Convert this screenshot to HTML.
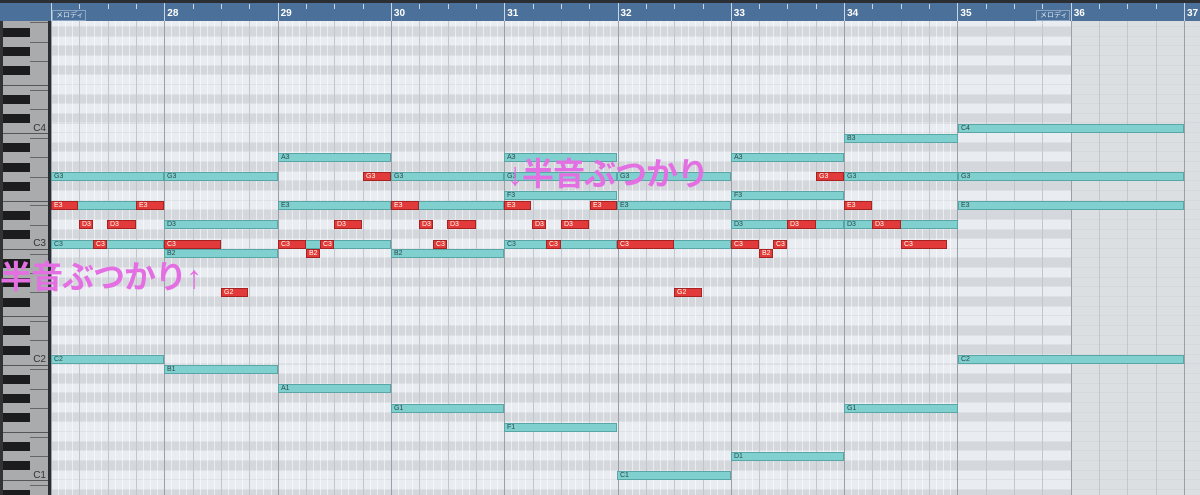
<!DOCTYPE html><html><head><meta charset="utf-8"><style>
html,body{margin:0;width:1200px;height:495px;overflow:hidden}
body{background:#dadde1;font-family:"Liberation Sans","Noto Sans CJK JP",sans-serif;position:relative}
div{position:absolute;box-sizing:border-box}
.n{height:9px;font-size:7px;line-height:8px;padding-left:2px;color:#2a4a4a;background:#80d0cf;border:1px solid #5aa6a6;overflow:hidden}
.r{background:#e2393a;border-color:#a82222;color:#ffe}
.ov{color:#e36fe3;font-weight:bold;font-size:32px;line-height:32px;white-space:nowrap;letter-spacing:-1px}
</style></head><body>
<div id="g" style="left:0;top:0;width:1200px;height:495px;overflow:hidden"></div>
<script>
var g=document.getElementById('g'),h='';
var RH=9.64,C1=470.5;
function yt(p){return C1-(p-12)*RH;}
var blk=[1,3,6,8,10];
for(var p=9;p<60;p++){var y=yt(p),b=blk.indexOf(p%12)>=0;
 h+='<div style="left:51px;top:'+y.toFixed(1)+'px;width:1020px;height:'+RH.toFixed(2)+'px;background:'+(b?'#d4d8dc':'#e9edf1')+';border-bottom:1px solid #dde1e5"></div>';
 h+='<div style="left:1071px;top:'+y.toFixed(1)+'px;width:129px;height:'+RH.toFixed(2)+'px;background:#dcdfe2;border-bottom:1px solid #d5d8db"></div>';}
var BW=113.3;
for(var i=0;i<8*16;i++){var x=51+i*BW/16;if(i%4)h+='<div style="left:'+x.toFixed(1)+'px;top:21px;width:1px;height:474px;background:rgba(255,255,255,.5)"></div>';}
for(var i=0;i<=40;i++){var x=51+i*BW/4;var bar=i%4==0;h+='<div style="left:'+x.toFixed(1)+'px;top:21px;width:1px;height:474px;background:'+(bar?'#9aa0a6':'#c2c7cc')+'"></div>';}
var N=[[43,51,164,'G3'],[43,164,278,'G3'],[43,391,504,'G3'],[43,504,617,'G3'],[43,617,731,'G3'],[43,844,958,'G3'],[43,958,1184,'G3'],[43,363,391,'G3',1],[43,816,844,'G3',1],
[45,278,391,'A3'],[45,504,617,'A3'],[45,731,844,'A3'],[47,844,958,'B3'],[48,958,1184,'C4'],
[41,504,617,'F3'],[41,731,844,'F3'],
[40,51,164,''],[40,51,78,'E3',1],[40,136,164,'E3',1],[40,278,391,'E3'],[40,391,504,''],[40,391,419,'E3',1],[40,504,531,'E3',1],[40,590,617,'E3',1],[40,617,731,'E3'],[40,844,872,'E3',1],[40,958,1184,'E3'],
[38,79,93,'D3',1],[38,107,136,'D3',1],[38,164,278,'D3'],[38,334,362,'D3',1],[38,419,433,'D3',1],[38,447,476,'D3',1],[38,532,546,'D3',1],[38,561,589,'D3',1],[38,731,844,'D3'],[38,787,816,'D3',1],[38,844,958,'D3'],[38,872,901,'D3',1],
[36,51,164,'C3'],[36,93,107,'C3',1],[36,164,221,'C3',1],[36,278,391,''],[36,278,306,'C3',1],[36,320,334,'C3',1],[36,433,447,'C3',1],[36,504,617,'C3'],[36,546,561,'C3',1],[36,617,731,''],[36,617,674,'C3',1],[36,731,759,'C3',1],[36,773,787,'C3',1],[36,901,947,'C3',1],
[35,164,278,'B2'],[35,306,320,'B2',1],[35,391,504,'B2'],[35,759,773,'B2',1],
[31,221,248,'G2',1],[31,674,702,'G2',1],
[24,51,164,'C2'],[24,958,1184,'C2'],[23,164,278,'B1'],[21,278,391,'A1'],[19,391,504,'G1'],[19,844,958,'G1'],[17,504,617,'F1'],[14,731,844,'D1'],[12,617,731,'C1']];
N.forEach(function(n){h+='<div class="n'+(n[4]?' r':'')+'" style="left:'+n[1]+'px;top:'+(yt(n[0])+0.5).toFixed(1)+'px;width:'+(n[2]-n[1])+'px">'+n[3]+'</div>';});
h+='<div style="left:0;top:21px;width:51px;height:474px;background:#a9abad"></div>';
for(var p=9;p<60;p++){var y=yt(p),m=p%12;
 if(blk.indexOf(m)>=0)h+='<div style="left:3px;top:'+(y+0.5).toFixed(1)+'px;width:27px;height:9px;background:#1c1c1e"></div>';
 if(m==0||m==5)h+='<div style="left:3px;top:'+(y+RH).toFixed(1)+'px;width:45px;height:1px;background:#555"></div>';
 if(m==2||m==4||m==7||m==9||m==11)h+='<div style="left:30px;top:'+(y+RH/2).toFixed(1)+'px;width:18px;height:1px;background:#666"></div>';
 if(m==0&&p>=12&&p<=48)h+='<div style="left:28px;top:'+(y-1).toFixed(1)+'px;width:18px;text-align:right;font-size:10px;color:#333">C'+(p/12)+'</div>';}
h+='<div style="left:0;top:21px;width:3px;height:474px;background:#333"></div><div style="left:48px;top:21px;width:3px;height:474px;background:#2a2d31"></div>';
h+='<div style="left:0;top:0;width:1200px;height:3px;background:#2b2e33"></div><div style="left:0;top:3px;width:1200px;height:18px;background:#4b709a"></div>';
for(var i=0;i<=40;i++){var x=51+i*BW/4,bar=i%4==0;h+='<div style="left:'+x.toFixed(1)+'px;top:'+(bar?3:4)+'px;width:1px;height:'+(bar?18:5)+'px;background:#c9d6e4"></div>';
 if(bar&&i>0)h+='<div style="left:'+(x+3).toFixed(1)+'px;top:8px;font-size:10px;font-weight:bold;color:#fff">'+(27+i/4)+'</div>';}
h+='<div style="left:52px;top:10px;width:34px;height:11px;border:1px solid #8aa3c0;font-size:7px;color:#dfe8f2;line-height:9px;padding-left:3px">メロディー</div>';
h+='<div style="left:1036px;top:10px;width:34px;height:11px;border:1px solid #8aa3c0;font-size:7px;color:#dfe8f2;line-height:9px;padding-left:3px">メロディー</div>';
h+='<div class="ov" style="left:0;top:261px">半音ぶつかり↑</div><div class="ov" style="left:507px;top:158px">↓半音ぶつかり</div>';
g.innerHTML=h;
</script>
</body></html>
